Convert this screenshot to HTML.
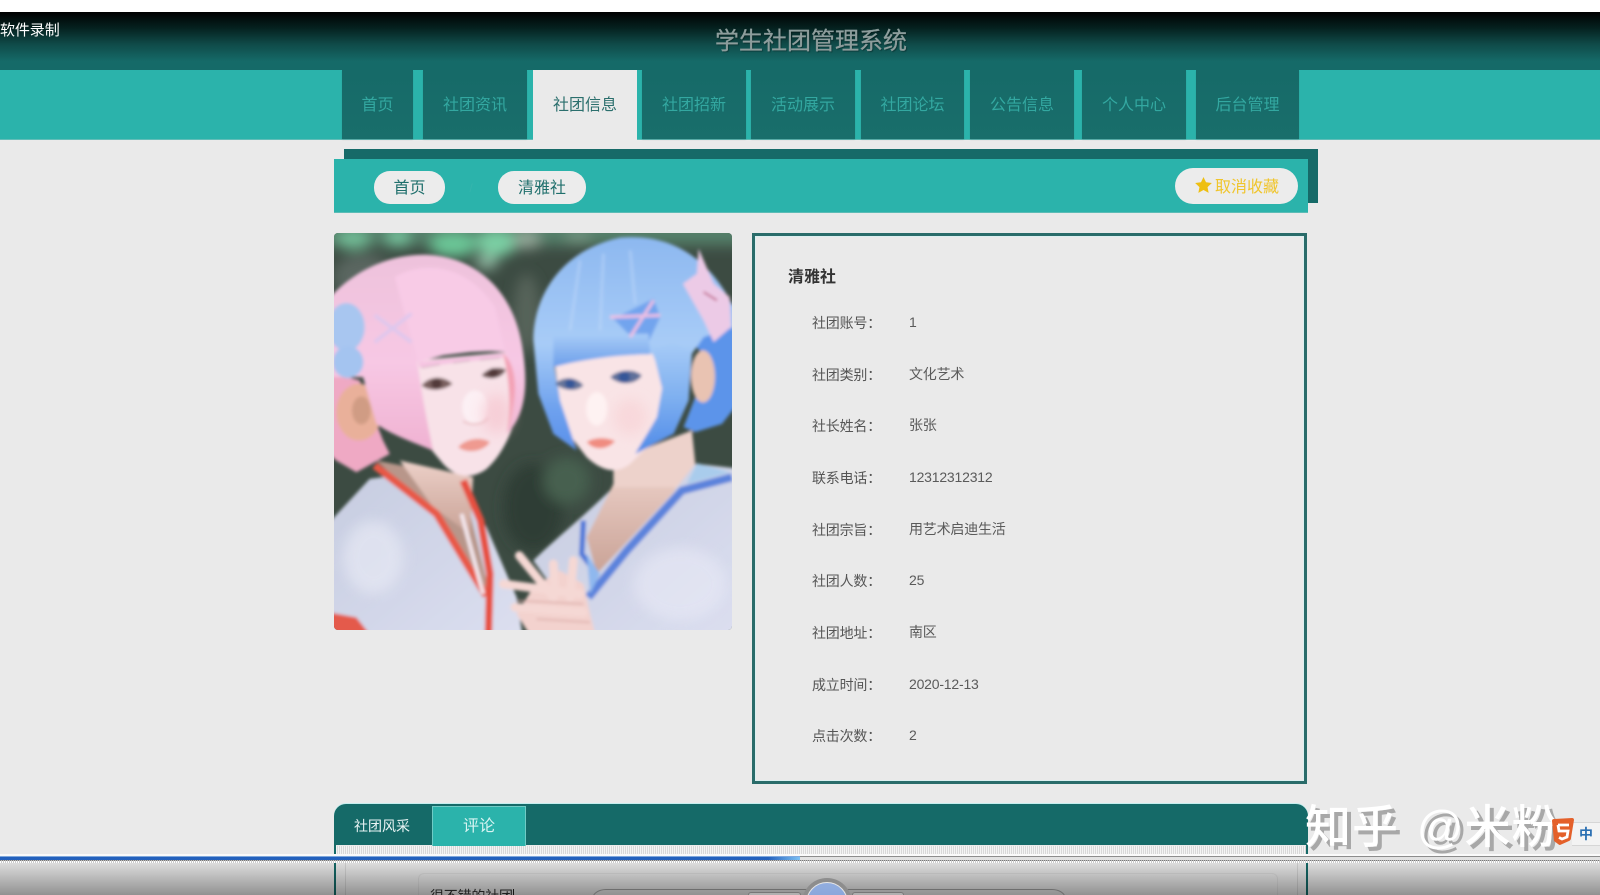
<!DOCTYPE html>
<html lang="zh-CN">
<head>
<meta charset="utf-8">
<title>学生社团管理系统</title>
<style>
*{margin:0;padding:0;box-sizing:border-box}
html,body{width:1600px;height:895px;overflow:hidden;background:#eaeaea}
body{position:relative;font-family:"Liberation Sans","Noto Sans CJK SC",sans-serif}
.a{position:absolute}
.c{position:absolute;display:flex;align-items:center;justify-content:center;white-space:nowrap}
.nav{top:70px;height:69px;padding-bottom:4px;background:linear-gradient(#166a68,#196e6b);color:#33a8a1;font-size:16px;box-shadow:0 1px 1px rgba(0,0,0,.12)}
.on{height:71px;padding-bottom:6px;background:#eaeaea;color:#2b6f6d;box-shadow:none}
.pill{background:#ececec;color:#1f6f6c;font-size:16px;border-radius:16px;padding-bottom:3px}
.t{position:absolute;height:20px;line-height:20px;font-size:14px;white-space:nowrap;letter-spacing:-.2px}
.l{left:812px;color:#555}
.v{left:909px;color:#5a5a5a}
</style>
</head>
<body>
<div class="a" style="left:0;top:0;width:1600px;height:12px;background:#fff"></div>
<div class="a" style="left:0;top:12px;width:1600px;height:58px;background:linear-gradient(#000 0,#052220 28%,#0f4a48 55%,#156a68 85%,#156a68 100%)"></div>
<div class="t" style="left:0;top:21px;color:#fff;font-size:15px;letter-spacing:-.1px">软件录制</div>
<div class="c" style="left:654px;top:20px;width:314px;height:36px;font-size:24px;color:#8d9d9c;-webkit-text-stroke:.3px #8d9d9c;text-shadow:1px 1px 1px rgba(0,0,0,.35)">学生社团管理系统</div>

<div class="a" style="left:0;top:70px;width:1600px;height:70px;background:#2bb3ab;border-bottom:1px solid #62bdb8"></div>
<div class="c nav" style="left:342px;width:71px">首页</div>
<div class="c nav" style="left:423px;width:104px">社团资讯</div>
<div class="c nav on" style="left:533px;width:104px">社团信息</div>
<div class="c nav" style="left:642px;width:104px">社团招新</div>
<div class="c nav" style="left:751px;width:104px">活动展示</div>
<div class="c nav" style="left:861px;width:103px">社团论坛</div>
<div class="c nav" style="left:970px;width:104px">公告信息</div>
<div class="c nav" style="left:1082px;width:104px">个人中心</div>
<div class="c nav" style="left:1196px;width:103px">后台管理</div>

<div class="a" style="left:344px;top:149px;width:974px;height:54px;background:#166a68"></div>
<div class="a" style="left:334px;top:159px;width:974px;height:54px;background:#2bb3ab;border-bottom:1px solid #5cbcb6"></div>
<div class="c pill" style="left:374px;top:171px;width:71px;height:33px">首页</div>
<div class="c" style="left:466px;top:178px;width:10px;height:20px;color:#35b5ad;font-size:12px">/</div>
<div class="c pill" style="left:498px;top:171px;width:88px;height:33px">清雅社</div>
<div class="c" style="left:1175px;top:168px;width:123px;height:36px;padding-bottom:2px;background:#ececec;border-radius:18px;color:#f0c52c;font-size:16px;gap:3px;padding-left:1px">
<svg width="17" height="16" viewBox="0 0 24 23"><path d="M12 0l3.6 7.6 8.4 1.1-6.2 5.8 1.6 8.3L12 18.7l-7.4 4.1 1.6-8.3L0 8.7l8.4-1.1z" fill="#eebf12"/></svg><span>取消收藏</span></div>

<svg class="a" style="left:334px;top:233px;border-radius:4px" width="398" height="397" viewBox="43 38 1192 1190" preserveAspectRatio="none">
<defs>
<filter id="b" filterUnits="userSpaceOnUse" x="-50" y="-50" width="1400" height="1400"><feGaussianBlur stdDeviation="5"/></filter>
<filter id="bb" filterUnits="userSpaceOnUse" x="-50" y="-50" width="1400" height="1400"><feGaussianBlur stdDeviation="20"/></filter>
<linearGradient id="ph" x1="0" y1="0" x2="0" y2="1"><stop offset="0" stop-color="#eec2dc"/><stop offset=".55" stop-color="#f7c8e4"/><stop offset="1" stop-color="#f0b2d2"/></linearGradient>
<linearGradient id="bh" x1="0" y1="0" x2="0" y2="1"><stop offset="0" stop-color="#8db8f0"/><stop offset=".5" stop-color="#a8ccf7"/><stop offset=".8" stop-color="#6fa2ee"/><stop offset="1" stop-color="#5a90ea"/></linearGradient>
<linearGradient id="bl" x1="0" y1="0" x2="0" y2="1"><stop offset="0" stop-color="#a8ccf7"/><stop offset=".5" stop-color="#7fb0f0"/><stop offset="1" stop-color="#4f8ae8"/></linearGradient>
<linearGradient id="fr" x1="0" y1="0" x2="0" y2="1"><stop offset="0" stop-color="#a8ccf7"/><stop offset="1" stop-color="#6c9eea"/></linearGradient>
<linearGradient id="cl" x1="0" y1="0" x2="1" y2="1"><stop offset="0" stop-color="#c6cce0"/><stop offset="1" stop-color="#dcdff0"/></linearGradient>
<linearGradient id="nk" x1="0" y1="0" x2="0" y2="1"><stop offset="0" stop-color="#ecd0c8"/><stop offset="1" stop-color="#c9a296"/></linearGradient>
</defs>
<rect x="0" y="0" width="1300" height="1300" fill="#3c4b42"/>
<g filter="url(#bb)">
<rect x="0" y="0" width="1300" height="75" fill="#55806a"/>
<ellipse cx="100" cy="60" rx="50" ry="25" fill="#76c49c"/>
<ellipse cx="235" cy="55" rx="35" ry="25" fill="#78c8a0"/>
<ellipse cx="400" cy="75" rx="70" ry="35" fill="#6cc898"/>
<ellipse cx="530" cy="70" rx="60" ry="38" fill="#7cd0a4"/>
<ellipse cx="500" cy="125" rx="35" ry="22" fill="#8fb5a0"/>
<ellipse cx="620" cy="60" rx="40" ry="25" fill="#97ac9c"/>
<ellipse cx="775" cy="50" rx="40" ry="15" fill="#7c9c88"/>
<ellipse cx="640" cy="860" rx="90" ry="130" fill="#2f3e35"/>
<ellipse cx="740" cy="780" rx="70" ry="70" fill="#46604f"/>
<ellipse cx="130" cy="170" rx="90" ry="70" fill="#5a6660"/>
<ellipse cx="620" cy="280" rx="40" ry="120" fill="#56645a"/>
</g>
<g filter="url(#b)">
<!-- left girl clothes -->
<path d="M20 915L150 775 260 760 420 790 500 920 590 1130 610 1260H20z" fill="url(#cl)"/>
<path d="M170 720L425 770 510 1120 340 880z" fill="#b8968a"/>
<path d="M240 720L460 770 450 940 340 860z" fill="url(#nk)"/>
<path d="M165 735L350 880 498 1125" fill="none" stroke="#e85846" stroke-width="22"/>
<path d="M430 780L482 900 510 1060 505 1260" fill="none" stroke="#e6503f" stroke-width="22"/>
<path d="M425 880L490 1120" fill="none" stroke="#f4e8ee" stroke-width="12"/>
<path d="M10 1172L110 1190 165 1260H10z" fill="#e45a4c"/>
<!-- right girl clothes -->
<path d="M640 1020C700 960 800 880 890 790L1130 730 1260 745V1260H810z" fill="url(#cl)"/>
<path d="M880 790L1100 740 1060 815 830 1060 800 950z" fill="url(#nk)"/>
<path d="M1235 770L1085 810 920 990 805 1130" fill="none" stroke="#5c83dc" stroke-width="24"/>
<path d="M790 900L785 1000 830 1060" fill="none" stroke="#4d78d8" stroke-width="16"/>
<path d="M1130 728L1230 755 1100 790z" fill="#a9ccec"/>
<path d="M800 1000L840 1060 810 1120z" fill="#8fb8ee"/>
<!-- neck right -->
<path d="M880 720L1115 630 1125 730 1070 800 880 800z" fill="#edd2cb"/>
<!-- left head: back hair & ear -->
<path d="M15 450L120 480 190 660 210 700 110 755 50 720 15 690z" fill="#efa9c4"/>
<ellipse cx="118" cy="575" rx="68" ry="85" fill="#e9b09a"/>
<ellipse cx="125" cy="570" rx="28" ry="42" fill="#d09c84"/>
<!-- face left -->
<path d="M285 420L560 395 590 560C585 620 550 700 500 745 460 775 410 775 370 730L320 670z" fill="#f8e2e8"/>
<!-- hair left -->
<path d="M15 250C110 130 250 92 350 106 490 125 590 230 610 400 625 510 612 590 560 640 575 560 575 470 555 395 450 385 370 395 292 420 305 520 325 620 340 690 280 665 210 640 170 610L130 470 15 470z" fill="url(#ph)"/>
<path d="M225 170C310 120 440 130 525 260L555 390 450 395 370 405 295 425 260 300z" fill="#f8cbe6"/>
<path d="M295 425C370 415 470 405 555 398 550 410 548 412 540 414 460 420 370 430 300 442z" fill="#f6c4e2"/>
<path d="M548 398C590 430 600 520 560 640 572 560 570 470 548 398z" fill="#f3a3b6"/>
<path d="M305 442L360 432M400 427L450 420M480 418L540 412" stroke="#c9a9b8" stroke-width="5" opacity=".6"/>
<!-- accessories left -->
<ellipse cx="80" cy="320" rx="55" ry="72" fill="#a8c6f0"/>
<ellipse cx="85" cy="425" rx="46" ry="48" fill="#a4c4f0"/>
<path d="M165 285L275 365M275 280L165 365" stroke="#dcc8ee" stroke-width="10"/>
<!-- left face details -->
<path d="M305 495C330 465 370 465 398 490 375 510 330 515 305 495z" fill="#7a605e"/>
<path d="M485 465C505 440 540 438 558 448 545 475 510 480 485 465z" fill="#6e5656"/>
<ellipse cx="350" cy="490" rx="16" ry="15" fill="#523a3a"/>
<ellipse cx="520" cy="457" rx="15" ry="14" fill="#523a3a"/>
<ellipse cx="465" cy="560" rx="38" ry="50" fill="#fcf0f4"/>
<path d="M430 602C450 615 490 615 505 592" stroke="#e8bcc0" stroke-width="5" fill="none"/>
<path d="M415 680C440 650 490 650 510 665 490 695 440 700 415 680z" fill="#ef9a90"/>
<!-- right head: ear + back hair -->
<path d="M1100 350L1260 240V540L1205 610 1125 635 1090 620 1125 530 1175 430z" fill="#5b94ea"/>
<ellipse cx="1148" cy="468" rx="36" ry="78" fill="#e9c3b2"/>
<!-- face right -->
<path d="M700 400L880 380 1005 400 1045 540 1010 650 930 730C890 760 850 755 800 710L730 620z" fill="#f9e4e6"/>
<!-- hair right -->
<path d="M640 360C640 230 720 90 900 52 1060 38 1170 120 1240 260L1240 320 1150 350 1115 400 1105 540 1060 640 1000 400 840 400 700 420 720 540 770 690 700 640 655 520z" fill="url(#bh)"/>
<path d="M995 395L1060 360 1110 400 1105 540 1060 640 945 700 1010 590 1030 480z" fill="url(#bl)"/>
<path d="M880 295L1000 235 1020 290 985 365 955 372z" fill="#6a9eec" opacity=".85"/>
<path d="M700 340H985L990 402C900 402 790 416 700 440z" fill="url(#fr)"/>
<path d="M780 120L750 330M850 100L840 330M930 90L945 250" stroke="#c2dafa" stroke-width="8" opacity=".5"/>
<path d="M870 290L1020 285M930 350L1000 240" stroke="#f0c0e2" stroke-width="9"/>
<!-- flower -->
<path d="M1135 85L1180 190 1228 230 1232 320 1180 365 1150 300 1088 190 1130 160z" fill="#eccae6"/>
<path d="M1150 215L1190 240" stroke="#c2688c" stroke-width="6"/>
<!-- right face details -->
<path d="M705 490C730 465 770 470 790 495 770 515 730 512 705 490z" fill="#66749a"/>
<path d="M870 470C895 445 945 445 965 465 945 495 895 495 870 470z" fill="#5e709a"/>
<ellipse cx="750" cy="490" rx="15" ry="15" fill="#355698"/>
<ellipse cx="912" cy="470" rx="17" ry="17" fill="#355698"/>
<ellipse cx="830" cy="565" rx="32" ry="50" fill="#fef2f2"/>
<path d="M800 665C820 650 860 650 885 662 860 690 820 690 800 665z" fill="#f08c80"/>
<!-- hands -->
<path d="M640 1100L720 1050 790 1090 810 1180 830 1260H640L590 1180z" fill="#f3d2ce"/>
<g stroke="#f5d8d4" stroke-width="26" stroke-linecap="round" fill="none">
<path d="M598 1005L700 1130"/>
<path d="M700 1030L705 1120"/>
<path d="M760 1020L750 1130"/>
<path d="M550 1090L780 1120"/>
<path d="M585 1160L790 1175"/>
</g>
<path d="M590 1140L790 1150M650 1195L810 1205" stroke="#d8a8a4" stroke-width="4"/>
</g>
<g filter="url(#bb)" opacity=".6">
<ellipse cx="160" cy="1010" rx="90" ry="110" fill="#eaecf6"/>
<ellipse cx="1080" cy="1090" rx="140" ry="110" fill="#e8e9f6"/>
<ellipse cx="530" cy="580" rx="45" ry="60" fill="#f6c2cc"/>
<ellipse cx="930" cy="590" rx="50" ry="55" fill="#f8d0d4"/>
</g>
</svg>

<div class="a" style="left:752px;top:233px;width:555px;height:551px;border:3px solid #2a6c6a;box-shadow:inset 0 0 0 1px #dcf0f0"></div>
<div class="t" style="left:788px;top:267px;font-size:16px;font-weight:700;color:#333;letter-spacing:0;height:22px;line-height:22px">清雅社</div>
<div class="t l" style="top:313px">社团账号：</div><div class="t v" style="top:312px">1</div>
<div class="t l" style="top:365px">社团类别：</div><div class="t v" style="top:364px">文化艺术</div>
<div class="t l" style="top:416px">社长姓名：</div><div class="t v" style="top:415px">张张</div>
<div class="t l" style="top:468px">联系电话：</div><div class="t v" style="top:467px">12312312312</div>
<div class="t l" style="top:520px">社团宗旨：</div><div class="t v" style="top:519px">用艺术启迪生活</div>
<div class="t l" style="top:571px">社团人数：</div><div class="t v" style="top:570px">25</div>
<div class="t l" style="top:623px">社团地址：</div><div class="t v" style="top:622px">南区</div>
<div class="t l" style="top:675px">成立时间：</div><div class="t v" style="top:674px">2020-12-13</div>
<div class="t l" style="top:726px">点击次数：</div><div class="t v" style="top:725px">2</div>

<div class="a" style="left:334px;top:804px;width:974px;height:41px;background:#156a68;border-radius:12px 12px 0 0;box-shadow:0 -1px 0 #c4eeee"></div>
<div class="c" style="left:334px;top:806px;width:96px;height:40px;font-size:14px;color:#e8f4f4">社团风采</div>
<div class="c" style="left:432px;top:806px;width:94px;height:40px;padding-bottom:5px;background:#2bb3ab;color:#d8f4f2;font-size:16px;border:1px solid #6fcbc5;border-bottom:0">评论</div>

<div class="a" style="left:334px;top:845px;width:2px;height:50px;background:#156a68"></div>
<div class="a" style="left:1306px;top:845px;width:2px;height:50px;background:#156a68"></div>
<div class="a" style="left:345px;top:846px;width:1px;height:49px;background:#d4d4d4"></div>
<div class="a" style="left:1297px;top:846px;width:1px;height:49px;background:#d4d4d4"></div>
<div class="a" style="left:418px;top:873px;width:860px;height:30px;border:1px solid #dedede;border-radius:6px"></div>
<div class="t" style="left:430px;top:886px;color:#333">很不错的社团</div>
<div class="a" style="left:513px;top:889px;width:1px;height:6px;background:#222"></div>

<!-- recorder overlay -->
<div class="a" style="left:336px;top:846px;width:970px;height:9px;background:repeating-linear-gradient(90deg,#f4f4f4 0 1px,#d8d8d8 1px 2px)"></div>
<div class="a" style="left:0;top:854px;width:1600px;height:2px;background:#fafafa"></div>
<div class="a" style="left:0;top:856px;width:1600px;height:1px;background:#8c8c8c"></div>
<div class="a" style="left:0;top:857px;width:1600px;height:3px;background:#e2e2e2"></div>
<div class="a" style="left:0;top:857px;width:800px;height:3px;background:linear-gradient(90deg,#2461bd 0,#2461bd 96%,#7cc0f4 100%);box-shadow:0 -1px 0 #7fa8dc"></div>
<div class="a" style="left:0;top:860px;width:1600px;height:1px;background:repeating-linear-gradient(90deg,#777 0 1px,#bbb 1px 2px)"></div>
<div class="a" style="left:0;top:861px;width:1600px;height:2px;background:repeating-linear-gradient(90deg,#fff 0 1px,#ccc 1px 2px)"></div>
<div class="a" style="left:0;top:863px;width:1600px;height:32px;background:linear-gradient(rgba(0,0,0,.06),rgba(0,0,0,.38))"></div>
<div class="a" style="left:592px;top:889px;width:474px;height:20px;border:1px solid #6e6e6e;border-radius:14px/10px;background:rgba(150,150,150,.35)"></div>
<div class="a" style="left:748px;top:892px;width:53px;height:10px;border:1px solid #777;border-radius:3px;background:#b0b0b0"></div>
<div class="a" style="left:852px;top:892px;width:52px;height:10px;border:1px solid #777;border-radius:3px;background:#b0b0b0"></div>
<div class="a" style="left:802px;top:878px;width:50px;height:50px;border-radius:50%;background:#8d8d8d"></div>
<div class="a" style="left:806px;top:882px;width:42px;height:42px;border-radius:50%;border:1px solid #e6e6e6;background:linear-gradient(#92aee0,#7a98d0)"></div>

<!-- watermark -->
<div class="a" style="left:1305px;top:794px;font-size:46px;line-height:66px;font-weight:500;color:#fff;text-shadow:4px 4px 0 #a8a8a8;white-space:nowrap;letter-spacing:1px;word-spacing:4px">知乎 @米粉</div>
<div class="c" style="left:1572px;top:822px;width:28px;height:24px;background:#f3f3f3;border-top:1px solid #d6d6d6;border-bottom:1px solid #d6d6d6;color:#2a6fb2;font-size:14px;font-weight:700">中</div>
<svg class="a" style="left:1551px;top:817px" width="24" height="29" viewBox="0 0 24 29"><path d="M1 4Q1 2 3 2L21 1Q23 1 23 3L20 21Q20 23 18 24L9 28Q8 28 7 27L3 24z" fill="#e4602a"/><path d="M7 8H18M7 8L8 14H17L16 20 11 22 8 20.500" fill="none" stroke="#fff" stroke-width="2.800"/></svg>
</body>
</html>
